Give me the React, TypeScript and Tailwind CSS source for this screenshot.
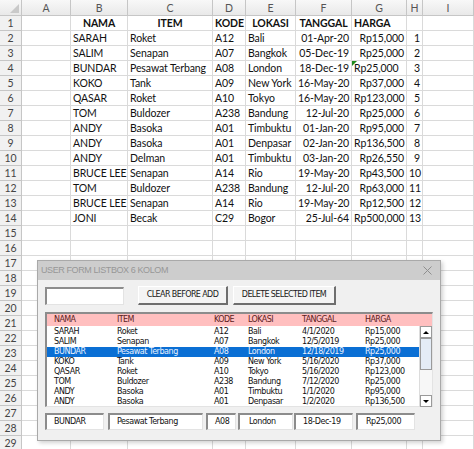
import React from 'react';

const colLetters = ['', 'A', 'B', 'C', 'D', 'E', 'F', 'G', 'H', 'I'];

type Row = [string, string, string, string, string, string, string];

const sheetRows: Row[] = [
  ['SARAH', 'Roket', 'A12', 'Bali', '01-Apr-20', 'Rp15,000', '1'],
  ['SALIM', 'Senapan', 'A07', 'Bangkok', '05-Dec-19', 'Rp25,000', '2'],
  ['BUNDAR', 'Pesawat Terbang', 'A08', 'London', '18-Dec-19', 'Rp25,000', '3'],
  ['KOKO', 'Tank', 'A09', 'New York', '16-May-20', 'Rp37,000', '4'],
  ['QASAR', 'Roket', 'A10', 'Tokyo', '16-May-20', 'Rp123,000', '5'],
  ['TOM', 'Buldozer', 'A238', 'Bandung', '12-Jul-20', 'Rp25,000', '6'],
  ['ANDY', 'Basoka', 'A01', 'Timbuktu', '01-Jan-20', 'Rp95,000', '7'],
  ['ANDY', 'Basoka', 'A01', 'Denpasar', '02-Jan-20', 'Rp136,500', '8'],
  ['ANDY', 'Delman', 'A01', 'Timbuktu', '03-Jan-20', 'Rp26,550', '9'],
  ['BRUCE LEE', 'Senapan', 'A14', 'Rio', '19-May-20', 'Rp43,500', '10'],
  ['TOM', 'Buldozer', 'A238', 'Bandung', '12-Jul-20', 'Rp63,000', '11'],
  ['BRUCE LEE', 'Senapan', 'A14', 'Rio', '19-May-20', 'Rp12,500', '12'],
  ['JONI', 'Becak', 'C29', 'Bogor', '25-Jul-64', 'Rp500,000', '13'],
];

const listRows = [
  ['SARAH', 'Roket', 'A12', 'Bali', '4/1/2020', 'Rp15,000'],
  ['SALIM', 'Senapan', 'A07', 'Bangkok', '12/5/2019', 'Rp25,000'],
  ['BUNDAR', 'Pesawat Terbang', 'A08', 'London', '12/18/2019', 'Rp25,000'],
  ['KOKO', 'Tank', 'A09', 'New York', '5/16/2020', 'Rp37,000'],
  ['QASAR', 'Roket', 'A10', 'Tokyo', '5/16/2020', 'Rp123,000'],
  ['TOM', 'Buldozer', 'A238', 'Bandung', '7/12/2020', 'Rp25,000'],
  ['ANDY', 'Basoka', 'A01', 'Timbuktu', '1/1/2020', 'Rp95,000'],
  ['ANDY', 'Basoka', 'A01', 'Denpasar', '1/2/2020', 'Rp136,500'],
];

const cellBase = 'relative border-r border-b border-[#dadada] whitespace-nowrap px-[2px] leading-[15px] text-[#111]';

const Cell = ({ children, align = 'left', bold = false, tri = false }: { children?: React.ReactNode; align?: 'left' | 'right' | 'center'; bold?: boolean; tri?: boolean }) => (
  <div className={`${cellBase} ${align === 'right' ? 'text-right' : align === 'center' ? 'text-center' : 'text-left'} ${bold ? 'font-bold' : ''}`}>
    {tri && <div className="absolute left-0 top-0 w-0 h-0 border-t-[5px] border-r-[5px] border-t-[#1e8a1e] border-r-transparent" />}
    {children}
  </div>
);

const RowHead = ({ n }: { n: number }) => (
  <div className="border-r border-b border-[#c6c6c6] bg-[#f1f1f1] text-center text-[#444] leading-[15px]">{n}</div>
);

const Sheet = () => {
  const rows = [];
  for (let r = 1; r <= 29; r++) {
    const d = r >= 2 && r <= 14 ? sheetRows[r - 2] : null;
    rows.push(
      <React.Fragment key={r}>
        <RowHead n={r} />
        <Cell />
        {r === 1 ? (
          <>
            <Cell align="center" bold>NAMA</Cell>
            <Cell align="center" bold>ITEM</Cell>
            <Cell bold>KODE</Cell>
            <Cell align="center" bold>LOKASI</Cell>
            <Cell align="center" bold>TANGGAL</Cell>
            <Cell bold>HARGA</Cell>
            <Cell />
          </>
        ) : d ? (
          <>
            <Cell>{d[0]}</Cell>
            <Cell>{d[1]}</Cell>
            <Cell>{d[2]}</Cell>
            <Cell>{d[3]}</Cell>
            <Cell align="right">{d[4]}</Cell>
            {r === 4 ? <Cell tri>{d[5]}</Cell> : <Cell align="right">{d[5]}</Cell>}
            <Cell align="right">{d[6]}</Cell>
          </>
        ) : (
          <>
            <Cell /><Cell /><Cell /><Cell /><Cell /><Cell /><Cell />
          </>
        )}
        <Cell />
      </React.Fragment>
    );
  }
  return (
    <div className="grid grid-cols-[22px_49px_57px_85px_33px_50px_56px_55px_16px_51px] grid-rows-[16px] auto-rows-[15px] text-[10.5px] tracking-[-0.1px] font-['Lato','Liberation_Sans',sans-serif]">
      {colLetters.map((c, i) => (
        <div key={i} className="relative border-r border-b border-[#c6c6c6] bg-gradient-to-b from-[#f8f8f8] to-[#e9e9e9] text-center text-[#555] leading-[16px]">
          {i === 0 && <div className="absolute right-[2px] bottom-[2px] w-0 h-0 border-b-[9px] border-l-[9px] border-b-[#c9c9c9] border-l-transparent" />}
          {c}
        </div>
      ))}
      {rows}
    </div>
  );
};

const sunken = 'border-t-2 border-l-2 border-t-[#8c8c8c] border-l-[#8c8c8c] border-r border-b border-r-[#e3e3e3] border-b-[#e3e3e3] bg-white';
const raised = 'border-t border-l border-t-white border-l-white border-r-2 border-b-2 border-r-[#6e6e6e] border-b-[#6e6e6e] bg-[#f4f4f4] text-[#1a1a1a] tracking-[-0.6px]';

const UserForm = () => (
  <div className="absolute left-[37px] top-[260px] w-[404px] h-[181px] border border-[#a9a9a9] bg-[#f0f0f0] shadow-[2px_2px_4px_rgba(0,0,0,0.18)] flex flex-col font-['DejaVu_Sans','Liberation_Sans',sans-serif] text-[8px] tracking-[-0.45px]">
    <div className="h-[19px] bg-[#cdcdcd] flex items-center justify-between pl-[3px] pr-[8px] shrink-0">
      <span className="text-[#979797] text-[9px] tracking-[-0.4px] font-['Liberation_Sans',sans-serif]">USER FORM LISTBOX 6 KOLOM</span>
      <svg width="9" height="9" viewBox="0 0 9 9" className="mt-[-1px]">
        <path d="M0.5 0.5L8.5 8.5M8.5 0.5L0.5 8.5" stroke="#8f8f8f" strokeWidth="1" />
      </svg>
    </div>
    <div className="flex flex-col pl-[7px] pt-[6px]">
      <div className="flex items-start h-[19px]">
        <div className={`${sunken} w-[79px] h-[18px] mt-[1px]`} />
        <button className={`${raised} ml-[14px] w-[90px] h-[19px] flex items-center justify-center`}>CLEAR BEFORE ADD</button>
        <button className={`${raised} ml-[5px] w-[103px] h-[19px] flex items-center justify-center`}>DELETE SELECTED ITEM</button>
      </div>
      <div className={`${sunken} mt-[7px] w-[388px] h-[95px] flex flex-col`}>
        <div className="h-[12px] bg-[#ffbfbf] text-[#5b1c1c] tracking-[-0.6px] grid grid-cols-[63px_97px_34px_54px_63px_1fr] pl-[7px] leading-[12px] shrink-0">
          <span>NAMA</span><span>ITEM</span><span>KODE</span><span>LOKASI</span><span>TANGGAL</span><span>HARGA</span>
        </div>
        <div className="flex flex-1">
          <div className="flex-1 flex flex-col pt-[1px]">
            {listRows.map((r, i) => (
              <div key={i} className={`grid grid-cols-[63px_97px_34px_54px_63px_1fr] pl-[7px] h-[10px] leading-[10px] whitespace-nowrap ${i === 2 ? 'bg-[#0a6fd4] text-[#e8f1ff]' : 'text-[#111]'}`}>
                {r.map((v, j) => <span key={j}>{v}</span>)}
              </div>
            ))}
          </div>
          <div className="w-[13px] flex flex-col border-l border-[#dcdcdc] bg-[#f7f7f7]">
            <div className="h-[12px] border border-[#9a9a9a] bg-white flex items-center justify-center">
              <div className="w-0 h-0 border-l-[3px] border-r-[3px] border-b-[3px] border-l-transparent border-r-transparent border-b-black" />
            </div>
            <div className="h-[32px] border border-[#9a9a9a] bg-[#e4ecf6]" />
            <div className="flex-1" />
            <div className="h-[12px] border border-[#9a9a9a] bg-white flex items-center justify-center">
              <div className="w-0 h-0 border-l-[3px] border-r-[3px] border-t-[3px] border-l-transparent border-r-transparent border-t-black" />
            </div>
          </div>
        </div>
      </div>
      <div className="flex mt-[6px] h-[17px] text-[#111] leading-[14px]">
        <div className={`${sunken} w-[59px] pl-[7px]`}>BUNDAR</div>
        <div className={`${sunken} ml-[4px] w-[95px] pl-[7px]`}>Pesawat Terbang</div>
        <div className={`${sunken} ml-[3px] w-[30px] pl-[7px]`}>A08</div>
        <div className={`${sunken} ml-[2px] w-[55px] pl-[9px]`}>London</div>
        <div className={`${sunken} ml-[1px] w-[59px] pl-[7px]`}>18-Dec-19</div>
        <div className={`${sunken} ml-[3px] w-[59px] pl-[8px]`}>Rp25,000</div>
      </div>
    </div>
  </div>
);

export default function App() {
  return (
    <div className="relative w-[474px] h-[449px] overflow-hidden bg-white">
      <Sheet />
      <UserForm />
    </div>
  );
}
